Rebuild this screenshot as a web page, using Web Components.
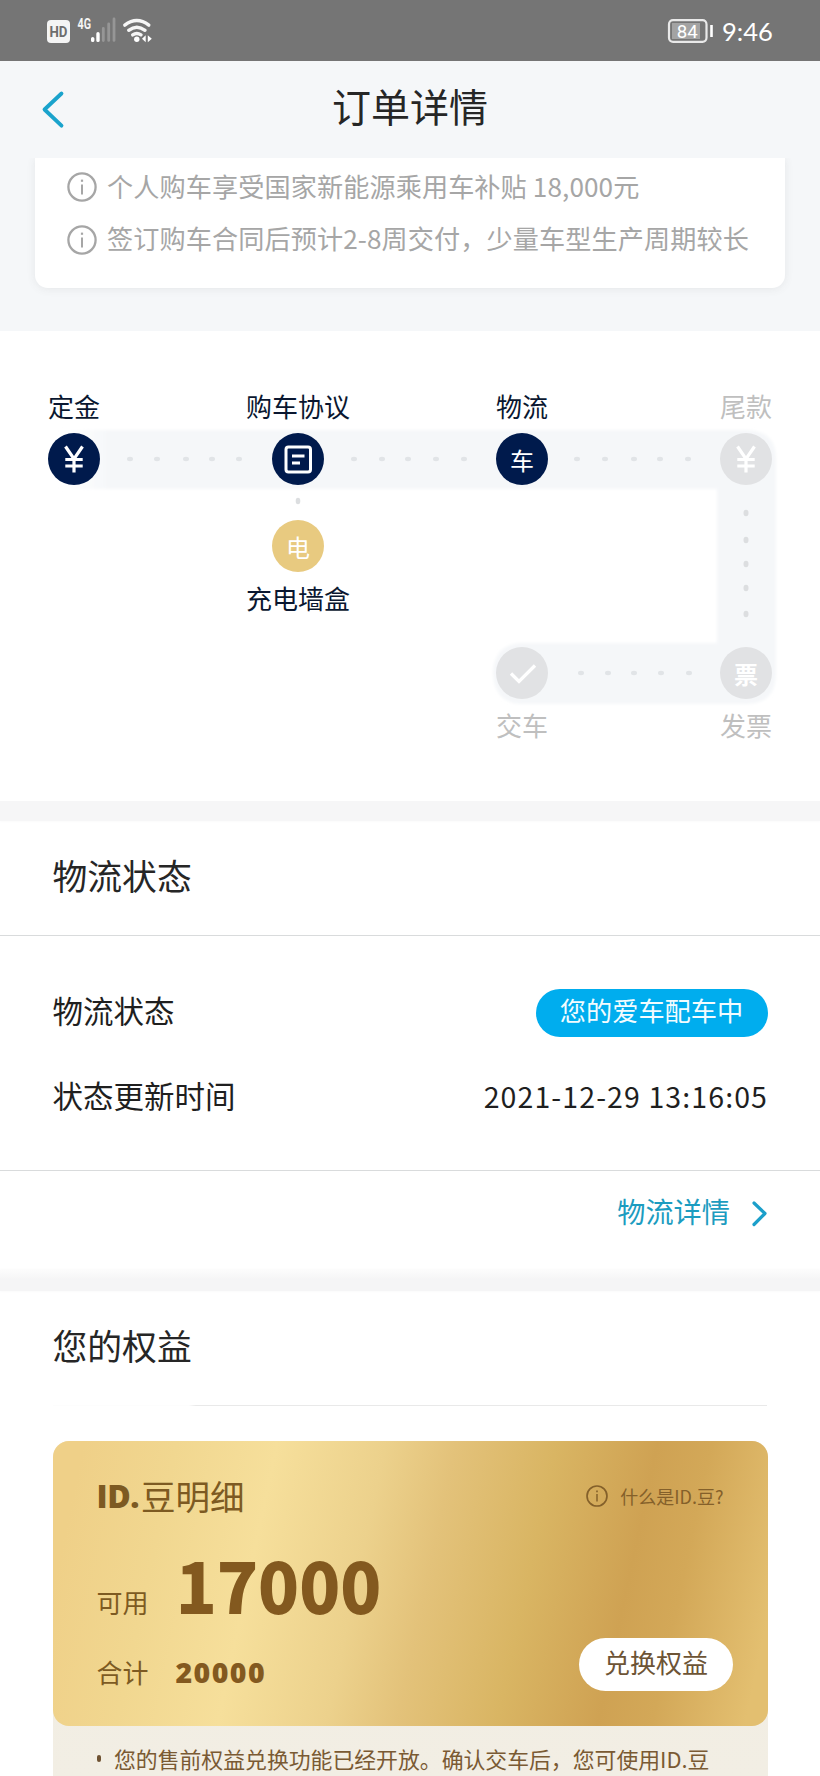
<!DOCTYPE html>
<html lang="zh-CN">
<head>
<meta charset="utf-8">
<title>订单详情</title>
<style>
body{margin:0;background:#fff;width:820px;height:1776px;overflow:hidden;font-family:"Noto Sans CJK SC",sans-serif;color:#222}
</style>
</head>
<body>
<order-page></order-page>
<script>
const define = (name, html) => customElements.define(name, class extends HTMLElement {
  constructor() {
    super();
    const t = document.createElement('template');
    t.innerHTML = typeof html === 'function' ? html(this) : html;
    this.attachShadow({mode: 'open'}).append(t.content.cloneNode(true));
  }
});

define('status-bar', `
<style>
:host{display:flex;height:61px;background:#757575;color:#fff;align-items:center;justify-content:space-between;padding:0 47px 0 46px;box-sizing:border-box}
svg{display:block}
.right{display:flex;align-items:center;gap:8px;height:61px}
.time{font:400 25.500px/61px "Lato","Noto Sans CJK SC",sans-serif;width:51px;padding-top:1px;box-sizing:border-box;height:61px;white-space:nowrap}
</style>
<svg width="110" height="61" viewBox="46 0 110 61">
  <rect x="47" y="20" width="23" height="23" rx="4" fill="#f4f4f4"/>
  <text x="58.5" y="36.800" text-anchor="middle" font-family="Roboto,sans-serif" font-weight="700" font-size="15" textLength="18" lengthAdjust="spacingAndGlyphs" fill="#6d6d6d">HD</text>
  <text x="77.5" y="29.3" font-family="Roboto,sans-serif" font-weight="700" font-size="14" textLength="13.5" lengthAdjust="spacingAndGlyphs" fill="#f4f4f4">4G</text>
  <g stroke-width="3.4" stroke-linecap="round"><path d="M92.7 38.6v1.8M98 33.8v6.6" stroke="#fff"/><path d="M103.3 28.5v12M108.7 24v16.4M114 19v21.4" stroke="#969696" stroke-width="2.8"/></g>
  <g fill="none" stroke="#f6f6f6" stroke-width="3.4" stroke-linecap="round"><path d="M124.8 25.2Q136.800 16 148.800 25.2M128.700 30.300Q136.800 24 145 30.300M132.700 34.900Q136.800 32 141 34.900"/></g>
  <circle cx="136.8" cy="39.3" r="2.7" fill="#fff"/><path d="M145.700 35.300v7l-3.700-3.500zM147.800 35.300v7l4-3.500z" fill="#fff"/>
</svg>
<div class="right">
<svg width="47" height="61" viewBox="668 0 47 61">
  <rect x="670" y="20.200" width="37.500" height="21.600" rx="4" fill="none" stroke="#e9e9e9" stroke-width="2.200"/>
  <rect x="673" y="23" width="28" height="16" fill="#a3a3a3"/>
  <text x="688.3" y="37.700" text-anchor="middle" font-family="Roboto,sans-serif" font-size="19" textLength="21" lengthAdjust="spacingAndGlyphs" fill="#fff">84</text>
  <path d="M712.500 25v12" stroke="#fff" stroke-width="2.600"/>
</svg>
<span class="time">9:46</span>
</div>`);

define('nav-bar', `
<style>
:host{display:grid;grid-template-columns:40px 1fr 40px;align-items:center;height:97px;padding:0 41px;box-sizing:border-box;background:#f5f7f9}
h1{margin:0;font-size:39px;font-weight:400;line-height:60px;padding-bottom:10px;text-align:center;color:#262626}
svg{display:block}
</style>
<svg width="24" height="97" viewBox="41 61 24 97"><path d="M61.500 93.500L44.500 109.500L61.500 125.700" fill="none" stroke="#1aa3cc" stroke-width="3.800" stroke-linecap="round" stroke-linejoin="round"/></svg>
<h1><slot></slot></h1>`);

define('info-icon', `
<style>:host{display:block;width:var(--s,30px);height:var(--s,30px)}svg{display:block}</style>
<svg width="100%" height="100%" viewBox="0 0 30 30" fill="none" stroke="currentColor"><circle cx="15" cy="15" r="13.600" stroke-width="2.300"/><path d="M15 12.400v10.200" stroke-width="2"/><path d="M15 7.600v2.200" stroke-width="2.200"/></svg>`);

define('info-line', `
<style>:host{display:flex;align-items:center;height:52.500px;color:#a6a6a6;font-size:26.150px;letter-spacing:.100px;white-space:nowrap}
info-icon{margin:0 10px 0 67px;--s:30px}
span{line-height:40px;padding-bottom:3px}</style>
<info-icon></info-icon><span><slot></slot></span>`);

define('notice-card', `
<style>:host{display:block;background:#f5f7f9;height:173px;clip-path:inset(0)}
div{box-sizing:border-box;margin:0 35px;height:130px;background:#fff;border-radius:0 0 13px 13px;box-shadow:0 1px 8px rgba(90,90,90,.1);padding-top:3px}
::slotted(info-line){margin-left:-35px}</style>
<div><slot></slot></div>`);

define('flow-node', el => `
<style>:host{position:absolute;left:calc(var(--x)*1px - 60px);top:calc(var(--y)*1px - 26px);width:120px;height:52px;display:block}
.c{width:52px;height:52px;margin:0 auto;border-radius:50%;background:var(--bg,#001a4c);color:#fff;display:grid;place-items:center;font-size:24px;line-height:24px}
.c ::slotted(span){position:relative;top:1px}
.l{position:absolute;left:0;width:120px;text-align:center;font-size:26px;line-height:36px;white-space:nowrap;color:var(--fg,#0a1730);${el.hasAttribute('below') ? 'top:60px' : 'top:-45px'}}
</style>
<div class="c"><slot></slot></div><div class="l"><slot name="label"></slot></div>`);

define('yen-icon', `<style>:host,svg{display:block}</style><svg width="52" height="52" viewBox="0 0 52 52" fill="none" stroke="#fff" stroke-width="3.200"><path d="M17.500 13.500L26 26L34.500 13.500M26 26V39.500M17.300 26.500H34.700M17.300 33H34.700"/></svg>`);

const dots = (xs, ys) => xs.map((x, i) => `<ellipse cx="${x}" cy="${ys[i] ?? ys[0]}" rx="3" ry="2.200"/>`).join('');
define('order-flow', `
<style>
:host{display:block;position:relative;height:470px;background:#fff}
.track{display:block}
.off{--bg:#e1e2e4;--fg:#bfbfbf}
.gold{--bg:#e8ca80}
flow-node span{font-weight:400}
</style>
<svg class="track" width="820" height="470" viewBox="0 331 820 470">
  <defs><linearGradient id="a"><stop offset="0" stop-color="#f5f7f9" stop-opacity="0"/><stop offset=".07" stop-color="#f5f7f9"/></linearGradient>
  <filter id="s" x="-5%" y="-5%" width="110%" height="110%"><feGaussianBlur stdDeviation="1.500"/></filter></defs>
  <g filter="url(#s)"><path d="M60 430H745Q776 430 776 459V673Q776 704 746 704H520Q494 702 493 673Q494 645 520 643H717V489H60Z" fill="url(#a)"/></g>
  <g fill="#e1e4e7">${dots([130,157,186,212,239,354,382,408,436,464,577,605,634,660,688],[459])}${dots([581,608,634,661,689],[673])}</g>
  <g fill="#dcdee0"><ellipse cx="298" cy="501" rx="2.300" ry="3.200"/>${[513,540,564,588,614].map(y => `<ellipse cx="746" cy="${y}" rx="2.500" ry="3.200"/>`).join('')}</g>
</svg>
<flow-node style="--x:74;--y:128"><yen-icon></yen-icon><b slot="label" style="font-weight:400">定金</b></flow-node>
<flow-node style="--x:298;--y:128"><svg width="52" height="52" viewBox="0 0 52 52" fill="none" stroke="#fff" stroke-width="3"><rect x="14" y="14" width="24.500" height="25" rx="2.500"/><path d="M20 23H32.500M20 30H28"/></svg><b slot="label" style="font-weight:400">购车协议</b></flow-node>
<flow-node style="--x:522;--y:128"><span>车</span><b slot="label" style="font-weight:400">物流</b></flow-node>
<flow-node class="off" style="--x:746;--y:128"><yen-icon></yen-icon><b slot="label" style="font-weight:400">尾款</b></flow-node>
<flow-node class="gold" below style="--x:298;--y:215"><span>电</span><b slot="label" style="font-weight:400">充电墙盒</b></flow-node>
<flow-node class="off" below style="--x:522;--y:342"><svg width="52" height="52" viewBox="0 0 52 52" fill="none" stroke="#fff" stroke-width="3.300"><path d="M15 26.500L23 34.500L39 18.500"/></svg><b slot="label" style="font-weight:400">交车</b></flow-node>
<flow-node class="off" below style="--x:746;--y:342"><span style="font-weight:700">票</span><b slot="label" style="font-weight:400">发票</b></flow-node>`);

define('section-gap', `<style>:host{display:block;height:20px;background:#f6f6f7;box-shadow:0 0 3px #f6f6f7}</style>`);

define('section-title', `
<style>:host{display:block;height:114px;box-sizing:border-box;padding-left:52.500px}
h2{margin:0;font-size:34.800px;font-weight:400;line-height:108px;color:#262626}</style><h2><slot></slot></h2>`);

define('info-row', `
<style>:host{display:flex;height:48px;align-items:center;justify-content:space-between;padding:0 52px 0 52.500px;font-size:30.500px;color:#1f1f1f}
span{line-height:44px;padding-bottom:6px}</style><span><slot name="name"></slot></span><slot></slot>`);

define('status-pill', `
<style>:host{display:block;box-sizing:border-box;width:232px;height:48px;border-radius:24px;background:#00adee;color:#f2fcff;font-size:26.200px;line-height:42px;text-align:center;padding-right:1px}</style><slot></slot>`);

define('logistics-panel', `
<style>:host{display:block}
.rows{display:grid;gap:37px;padding-top:53px;height:236px;box-sizing:border-box;border-top:1px solid #d9dbdc;border-bottom:1px solid #d9dbdc;align-content:start}
time{font-size:28.500px;letter-spacing:1.100px;line-height:40px;padding-bottom:5px}
.more{display:flex;justify-content:flex-end;height:99px;padding-right:52px;font-size:28.200px;line-height:79px;color:#1c9cc0}
svg{display:block;margin:29px 0 0 20px}</style>
<section-title>物流状态</section-title>
<div class="rows">
<info-row><b slot="name" style="font-weight:400">物流状态</b><status-pill>您的爱车配车中</status-pill></info-row>
<info-row><b slot="name" style="font-weight:400">状态更新时间</b><time>2021-12-29 13:16:05</time></info-row>
</div>
<div class="more">物流详情<svg width="18" height="28" viewBox="0 0 18 28" fill="none" stroke="#1c9fca" stroke-width="3.200" stroke-linecap="round" stroke-linejoin="round"><path d="M4 3L15 13.500L4 24.500"/></svg></div>`);

define('gold-card', `
<style>
:host{display:block;margin:0 52px 0 53px;background:linear-gradient(#f1ece0,#f2eee4);border-radius:16px 16px 0 0;height:336px;color:#7d5a22}
.card{position:relative;height:285px;box-sizing:border-box;padding:35px 35px 0 43.500px;border-radius:16px;background:linear-gradient(102deg,#efd088 4%,#f1d790 16%,#f6df9b 29%,#ecd18c 43%,#e3c27a 52%,#d9b563 65%,#cfa253 78%,#d3a858 85%,#e3bf70 97%)}
.top{display:flex;justify-content:space-between;align-items:center;height:40px}
.t{display:flex;font-size:34.500px;line-height:40px;white-space:nowrap}
.id{display:block;font:800 32px/42px "Open Sans","Noto Sans CJK SC",sans-serif;width:44.500px;letter-spacing:-.500px}
.q{display:flex;align-items:center;font-size:18px;margin-right:9.500px;line-height:24px;color:#84602a}
.q span{margin-left:12px}
info-icon{--s:22px}
.r{display:flex;align-items:baseline;font-size:26px;line-height:40px}
.n{font-family:"Noto Sans CJK SC",sans-serif;font-weight:700;color:#83591f}
.a .n{font-size:67px;line-height:70px;margin-left:28px;letter-spacing:1.600px;-webkit-text-stroke:2px #83591f}
.s .n{font-family:"Open Sans",sans-serif;font-weight:800;font-size:28.500px;letter-spacing:1.400px;margin-left:27px}
.a{margin-top:33px;height:70px}.s{margin-top:33px}
.btn{position:absolute;right:35px;bottom:35px;width:154px;height:53px;border-radius:27px;background:#fff;text-align:center;font-size:26px;line-height:47px;color:#6d5436}
.note{display:flex;align-items:center;height:51px;font-size:21.850px;color:#7a5a33;white-space:nowrap;padding-left:44px}
.note i{width:4px;height:7px;border-radius:2px;background:#6f5232;margin-right:13px;margin-top:13px}
.note span{line-height:30px;padding-top:15px}
</style>
<div class="card">
<div class="top"><div class="t"><span class="id">ID.</span>豆明细</div><div class="q"><info-icon></info-icon><span>什么是ID.豆?</span></div></div>
<div class="r a">可用<span class="n">17000</span></div>
<div class="r s">合计<span class="n">20000</span></div>
<div class="btn">兑换权益</div>
</div>
<div class="note"><i></i><span>您的售前权益兑换功能已经开放。确认交车后，您可使用ID.豆</span></div>`);

define('benefits-panel', `
<style>:host{display:block}
hr{border:0;height:1px;margin:0 53px 35px;background:linear-gradient(90deg,#fdfdfd 0 19%,#e9e9e9 20%)}</style>
<section-title>您的权益</section-title><hr><gold-card></gold-card>`);

define('order-page', `
<style>:host{display:block;width:820px;height:1776px;overflow:hidden;background:#fff}
.soft{height:21px;background:linear-gradient(#fcfcfc,#f5f5f6 45%)}</style>
<status-bar></status-bar><nav-bar>订单详情</nav-bar>
<notice-card><info-line>个人购车享受国家新能源乘用车补贴 18,000元</info-line><info-line>签订购车合同后预计2-8周交付，少量车型生产周期较长</info-line></notice-card>
<order-flow></order-flow><section-gap></section-gap>
<logistics-panel></logistics-panel><section-gap class="soft"></section-gap>
<benefits-panel></benefits-panel>`);
</script>
</body>
</html>
